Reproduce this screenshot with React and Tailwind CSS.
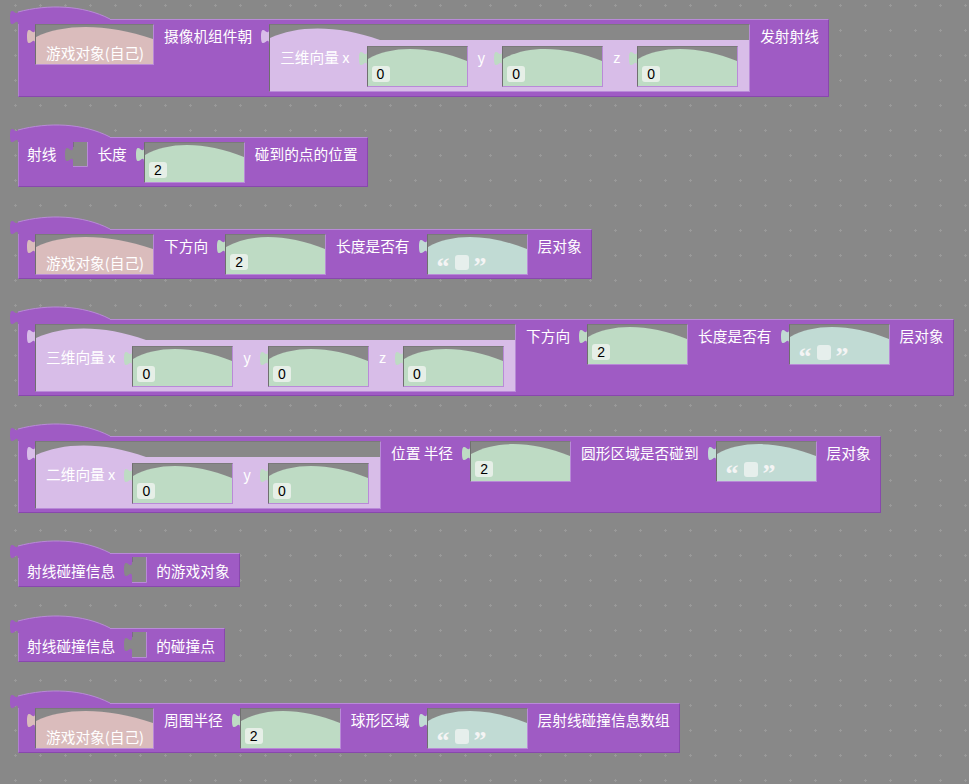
import React from 'react';

const PURPLE = '#9f5bc4';
const VEC = '#d8bde8';

const tones = {
  pink: { fill: '#dabcbc', bg: 'bg-[#dabcbc]' },
  green: { fill: '#bedbc4', bg: 'bg-[#bedbc4]' },
  teal: { fill: '#c1dbd4', bg: 'bg-[#c1dbd4]' },
};

function Grid() {
  return (
    <svg className="absolute inset-0 w-full h-full" aria-hidden="true">
      <defs>
        <pattern id="dots" x="14" y="4" width="25" height="25" patternUnits="userSpaceOnUse">
          <path d="M0 1.5H3M1.5 0V3" stroke="#999999" strokeWidth="1" />
        </pattern>
      </defs>
      <rect width="100%" height="100%" fill="url(#dots)" />
    </svg>
  );
}

// hat on top of every statement block, with the little flag on the left
function Hat() {
  return (
    <svg width="110" height="18" className="relative z-10 -mb-[5px] block">
      <path d="M8 6 C38 -2 73 -1 100 13 V18 H8 Z" fill={PURPLE} />
      <path d="M8 6 C38 -2 73 -1 100 13" fill="none" stroke="#b98ad8" />
      <path d="M8 4 c0 10 -8 -8 -8 7.5 s8 -2.5 8 7.5 z" fill={PURPLE} />
    </svg>
  );
}

function Tab({ fill }) {
  return (
    <svg width="8" height="20" className="block shrink-0">
      <path d="M8 5 c0 10 -8 -8 -8 7.5 s8 -2.5 8 7.5 z" fill={fill} />
    </svg>
  );
}

function L({ children, cls = 'mt-[2px]' }) {
  return <span className={`text-[14.7px] leading-5 text-white whitespace-nowrap ${cls}`}>{children}</span>;
}

function Block({ mt, pad = 'pt-[4px] pb-[3px]', children }) {
  return (
    <div className={`flex flex-col items-start ml-[10px] ${mt}`}>
      <Hat />
      <div
        className={`ml-[8px] flex items-start gap-[9px] pl-[8px] pr-[9px] border border-t-[#b98ad8] border-l-[#b17fd2] border-r-[#8848ad] border-b-[#8848ad] bg-[#9f5bc4] ${pad}`}
      >
        {children}
      </div>
    </div>
  );
}

function Val({ tone, w, children }) {
  const t = tones[tone];
  return (
    <div className="flex items-start shrink-0 mr-px">
      <Tab fill={t.fill} />
      <div className={`flex flex-col h-[41px] bg-[#888888] border-l border-t border-l-[#6f6f6f] border-t-[#7a7a7a] border-b border-r border-b-[#b98ad8] border-r-[#b98ad8] ${w}`}>
        <svg className="block w-full h-[15px]" viewBox="0 0 100 15" preserveAspectRatio="none">
          <path d="M0 12 C25 -2 62 -1 100 14 V15 H0 Z" fill={t.fill} />
        </svg>
        <div className={`flex-1 ${t.bg}`}>{children}</div>
      </div>
    </div>
  );
}

function Vec({ children }) {
  return (
    <div className="flex items-start shrink-0 mr-px">
      <Tab fill={VEC} />
      <div className="flex flex-col h-[68px] bg-[#888888] border-l border-t border-l-[#6f6f6f] border-t-[#7a7a7a] border-b border-r border-b-[#b98ad8] border-r-[#b98ad8]">
        <svg width="110" height="15" className="block">
          <path d="M0 13 C28 0 68 0 110 15 H0 Z" fill={VEC} />
        </svg>
        <div className="flex-1 flex items-start gap-[9px] pl-[10px] pr-[10px] pt-[6px] bg-[#d8bde8]">{children}</div>
      </div>
    </div>
  );
}

function Hole({ h }) {
  return (
    <svg width="23" height={h} className="block shrink-0">
      <path d={`M8 0H23V${h}H8V20C8 10 0 28 0 12.5C0 -3 8 15 8 5Z`} fill="#888888" />
      <path d={`M22.5 0V${h - 0.5}H8`} fill="none" stroke="#b98ad8" />
      <path d="M8.5 0V5" fill="none" stroke="#7a6a86" />
    </svg>
  );
}

function Num({ v }) {
  return (
    <div className="mt-[4px] ml-[4px] w-[18px] h-[16px] rounded-[3px] bg-[#e6efe7] text-black text-[14px] leading-4 text-center font-['Liberation_Sans',sans-serif]">
      {v}
    </div>
  );
}

function Self() {
  return <div className="mt-[3px] ml-[10px] text-[14.7px] leading-5 text-white whitespace-nowrap">游戏对象(自己)</div>;
}

function Quote() {
  return (
    <div className="flex items-center h-[16px] mt-[4px] ml-[9px] text-[#f4f4f4]">
      <span className="font-['Liberation_Serif',serif] font-bold text-[26px] leading-none translate-y-[5px]">“</span>
      <span className="w-[14px] h-[15px] rounded-[3px] bg-[#e6efec] ml-[5px] mr-[5px]" />
      <span className="font-['Liberation_Serif',serif] font-bold text-[26px] leading-none translate-y-[5px]">”</span>
    </div>
  );
}

function Vector3({ label }) {
  return (
    <Vec>
      <L cls="mt-[1px]">{label}</L>
      <Val tone="green" w="w-[101px]"><Num v="0" /></Val>
      <L cls="mt-[1px]">y</L>
      <Val tone="green" w="w-[101px]"><Num v="0" /></Val>
      <L cls="mt-[1px]">z</L>
      <Val tone="green" w="w-[101px]"><Num v="0" /></Val>
    </Vec>
  );
}

export default function App() {
  return (
    <div className="relative w-[969px] h-[784px] overflow-hidden bg-[#888888] font-['Noto_Sans_CJK_SC',sans-serif]">
      <Grid />
      <div className="relative flex flex-col items-start">
        <Block mt="mt-[6px]" pad="pt-[4px] pb-[4px]">
          <Val tone="pink" w="w-[119px]"><Self /></Val>
          <L>摄像机组件朝</L>
          <Vector3 label="三维向量 x" />
          <L>发射射线</L>
        </Block>

        <Block mt="mt-[27px]">
          <L>射线</L>
          <Hole h={25} />
          <L>长度</L>
          <Val tone="green" w="w-[101px]"><Num v="2" /></Val>
          <L>碰到的点的位置</L>
        </Block>

        <Block mt="mt-[29px]">
          <Val tone="pink" w="w-[119px]"><Self /></Val>
          <L>下方向</L>
          <Val tone="green" w="w-[101px]"><Num v="2" /></Val>
          <L>长度是否有</L>
          <Val tone="teal" w="w-[101px]"><Quote /></Val>
          <L>层对象</L>
        </Block>

        <Block mt="mt-[27px]">
          <Vector3 label="三维向量 x" />
          <L>下方向</L>
          <Val tone="green" w="w-[101px]"><Num v="2" /></Val>
          <L>长度是否有</L>
          <Val tone="teal" w="w-[101px]"><Quote /></Val>
          <L>层对象</L>
        </Block>

        <Block mt="mt-[27px]">
          <Vec>
            <L cls="mt-[1px]">二维向量 x</L>
            <Val tone="green" w="w-[101px]"><Num v="0" /></Val>
            <L cls="mt-[1px]">y</L>
            <Val tone="green" w="w-[101px]"><Num v="0" /></Val>
          </Vec>
          <L>位置 半径</L>
          <Val tone="green" w="w-[101px]"><Num v="2" /></Val>
          <L>圆形区域是否碰到</L>
          <Val tone="teal" w="w-[101px]"><Quote /></Val>
          <L>层对象</L>
        </Block>

        <Block mt="mt-[27px]" pad="pt-[3px] pb-[3px]">
          <L cls="mt-[4px]">射线碰撞信息</L>
          <Hole h={26} />
          <L cls="mt-[4px]">的游戏对象</L>
        </Block>

        <Block mt="mt-[28px]" pad="pt-[3px] pb-[3px]">
          <L cls="mt-[4px]">射线碰撞信息</L>
          <Hole h={26} />
          <L cls="mt-[4px]">的碰撞点</L>
        </Block>

        <Block mt="mt-[28px]">
          <Val tone="pink" w="w-[119px]"><Self /></Val>
          <L>周围半径</L>
          <Val tone="green" w="w-[101px]"><Num v="2" /></Val>
          <L>球形区域</L>
          <Val tone="teal" w="w-[101px]"><Quote /></Val>
          <L>层射线碰撞信息数组</L>
        </Block>
      </div>
    </div>
  );
}
